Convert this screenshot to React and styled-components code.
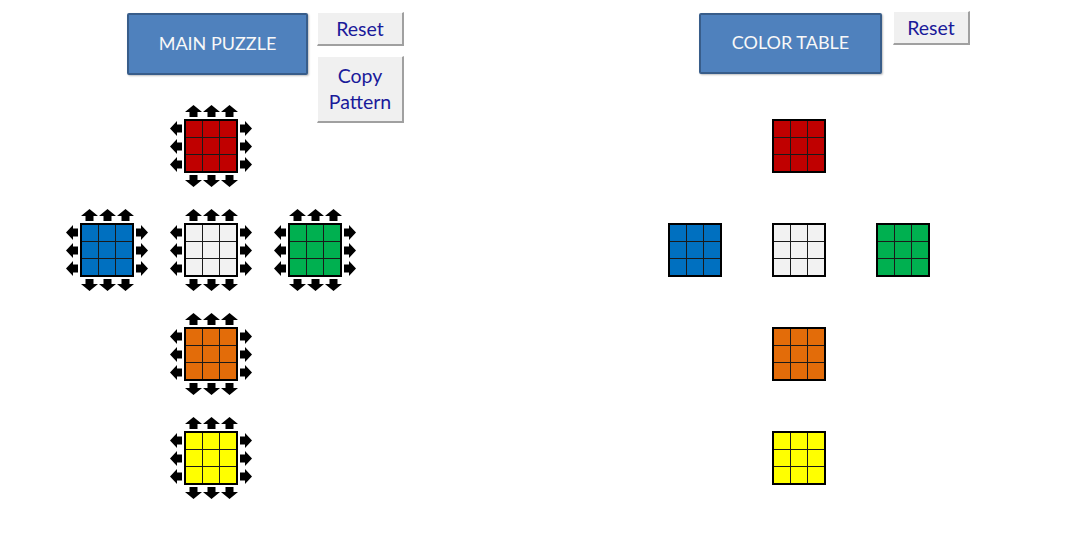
import React from 'react'
import styled, { createGlobalStyle } from 'styled-components'

const Global = createGlobalStyle`
  html, body {
    margin: 0;
    padding: 0;
    background: #ffffff;
  }
  body {
    font-family: 'Lato', 'Open Sans', sans-serif;
  }
`

const COLORS = {
  red: '#c00000',
  blue: '#0070c0',
  white: '#f2f2f2',
  green: '#00b050',
  orange: '#e36c09',
  yellow: '#ffff00'
}

// where each face goes in the unfolded cube
const LAYOUT = [
  { color: 'red', col: 2, row: 1 },
  { color: 'blue', col: 1, row: 2 },
  { color: 'white', col: 2, row: 2 },
  { color: 'green', col: 3, row: 2 },
  { color: 'orange', col: 2, row: 3 },
  { color: 'yellow', col: 2, row: 4 }
]

const ARROWS = {
  up: { vb: '0 0 17 12', pts: '8.5,0 17,7 12.5,7 12.5,12 4.5,12 4.5,7 0,7' },
  down: { vb: '0 0 17 12', pts: '8.5,12 17,5 12.5,5 12.5,0 4.5,0 4.5,5 0,5' },
  left: { vb: '0 0 12 15', pts: '0,7.5 7,0 7,3.5 12,3.5 12,11.5 7,11.5 7,15' },
  right: { vb: '0 0 12 15', pts: '12,7.5 5,0 5,3.5 0,3.5 0,11.5 5,11.5 5,15' }
}

function Arrow ({ dir }) {
  const a = ARROWS[dir]
  const vertical = dir === 'up' || dir === 'down'
  return (
    <svg
      width={vertical ? 17 : 12}
      height={vertical ? 12 : 15}
      viewBox={a.vb}
      style={{ display: 'block' }}
    >
      <polygon points={a.pts} fill='#000' />
    </svg>
  )
}

function Face ({ color, arrows }) {
  const grid = (
    <Grid color={COLORS[color]}>
      {Array.from({ length: 9 }).map((_, i) => (
        <Sticker key={i} />
      ))}
    </Grid>
  )
  if (!arrows) return grid
  return (
    <FaceWrap>
      <span />
      <ArrowRow>
        <Arrow dir='up' />
        <Arrow dir='up' />
        <Arrow dir='up' />
      </ArrowRow>
      <span />
      <ArrowCol>
        <Arrow dir='left' />
        <Arrow dir='left' />
        <Arrow dir='left' />
      </ArrowCol>
      {grid}
      <ArrowCol>
        <Arrow dir='right' />
        <Arrow dir='right' />
        <Arrow dir='right' />
      </ArrowCol>
      <span />
      <ArrowRow>
        <Arrow dir='down' />
        <Arrow dir='down' />
        <Arrow dir='down' />
      </ArrowRow>
      <span />
    </FaceWrap>
  )
}

function App () {
  return (
    <Page>
      <Global />
      <Panel>
        <Header inset={72}>
          <TitleButton>MAIN PUZZLE</TitleButton>
          <SideButtons>
            <GreyButton w={87} h={34}>Reset</GreyButton>
            <GreyButton w={87} h={67}>
              Copy
              <br />
              Pattern
            </GreyButton>
          </SideButtons>
        </Header>
        <Cross>
          {LAYOUT.map(f => (
            <Slot key={f.color} col={f.col} row={f.row}>
              <Face color={f.color} arrows />
            </Slot>
          ))}
        </Cross>
      </Panel>
      <Panel>
        <Header inset={56}>
          <TitleButton $wide>COLOR TABLE</TitleButton>
          <SideButtons $raise>
            <GreyButton w={77} h={34}>Reset</GreyButton>
          </SideButtons>
        </Header>
        <Cross>
          {LAYOUT.map(f => (
            <Slot key={f.color} col={f.col} row={f.row}>
              <Face color={f.color} />
            </Slot>
          ))}
        </Cross>
      </Panel>
    </Page>
  )
}

export default App

const Page = styled.div`
  width: 1080px;
  height: 556px;
  display: flex;
  gap: 276px;
  padding-left: 55px;
  box-sizing: border-box;
  overflow: hidden;
  background: #fff;
`

const Panel = styled.div`
  width: 312px;
  flex-shrink: 0;
  display: flex;
  flex-direction: column;
`

const Header = styled.div`
  height: 94px;
  display: flex;
  align-items: flex-start;
  gap: ${p => (p.inset === 72 ? 9 : 11)}px;
  padding-left: ${p => p.inset}px;
  position: relative;
  z-index: 1;
`

const TitleButton = styled.div`
  flex-shrink: 0;
  margin-top: 13px;
  width: ${p => (p.$wide ? 183 : 181)}px;
  height: ${p => (p.$wide ? 61 : 62)}px;
  box-sizing: border-box;
  background: #4f81bd;
  border: 2.5px solid #385d8a;
  border-radius: 2px;
  box-shadow: 1px 1px 2px rgba(0, 0, 0, 0.25);
  color: #f8f8f8;
  font-size: 18px;
  display: flex;
  align-items: center;
  justify-content: center;
  padding-bottom: 3px;
`

const SideButtons = styled.div`
  flex-shrink: 0;
  display: flex;
  flex-direction: column;
  gap: 10px;
  margin-top: ${p => (p.$raise ? 11 : 12)}px;
`

const GreyButton = styled.div`
  width: ${p => p.w}px;
  height: ${p => p.h}px;
  box-sizing: border-box;
  background: #f0f0f0;
  border-top: 1px solid #ffffff;
  border-left: 1px solid #ffffff;
  border-right: 2px solid #a0a0a0;
  border-bottom: 2px solid #a0a0a0;
  color: #1a1a9a;
  font-size: 19.5px;
  line-height: 26px;
  text-align: center;
  display: flex;
  align-items: center;
  justify-content: center;
`

const Cross = styled.div`
  display: grid;
  grid-template-columns: repeat(3, 104px);
  grid-template-rows: repeat(4, 104px);
`

const Slot = styled.div`
  grid-column: ${p => p.col};
  grid-row: ${p => p.row};
  display: flex;
  align-items: center;
  justify-content: center;
`

const FaceWrap = styled.div`
  display: grid;
  grid-template-columns: 12px 54px 12px;
  grid-template-rows: 12px 54px 12px;
  column-gap: 2px;
  row-gap: 2px;
`

const ArrowRow = styled.div`
  display: flex;
  justify-content: space-around;
  align-items: center;
`

const ArrowCol = styled.div`
  display: flex;
  flex-direction: column;
  justify-content: space-around;
  align-items: center;
`

const Grid = styled.div`
  width: 54px;
  height: 54px;
  box-sizing: border-box;
  border: 2px solid #000;
  background: #1a1a1a;
  display: grid;
  grid-template-columns: repeat(3, 1fr);
  grid-template-rows: repeat(3, 1fr);
  gap: 1px;
  & > * {
    background: ${p => p.color};
  }
`

const Sticker = styled.div``
